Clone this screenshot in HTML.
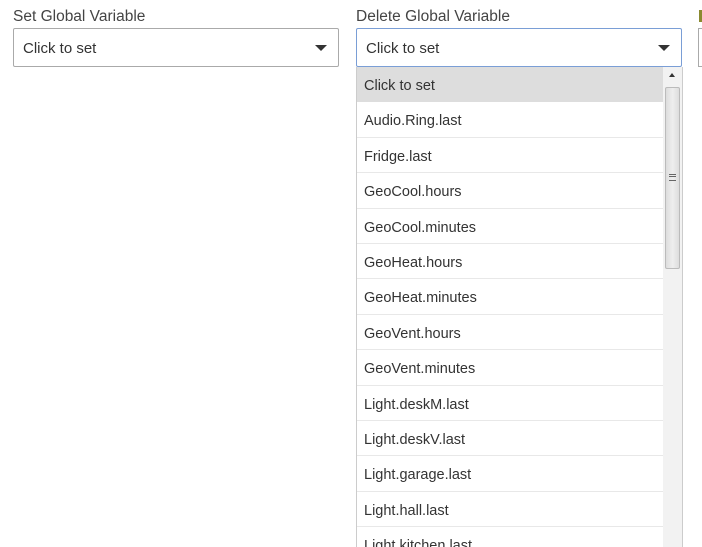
<!DOCTYPE html>
<html><head><style>
body{margin:0;width:702px;height:547px;overflow:hidden;background:#fff;font-family:"Liberation Sans",sans-serif;position:relative}
.lbl{position:absolute;top:8px;font-size:15.5px;color:#444}
.sel{position:absolute;top:28px;height:37px;width:324px;border:1px solid #aaa;border-radius:2px;box-sizing:content-box;font-size:15px;color:#333}
.sel span{position:absolute;left:9px;top:11px}
.sel i{position:absolute;right:11px;top:16px;width:0;height:0;border-left:6px solid transparent;border-right:6px solid transparent;border-top:6px solid #333}
.list{position:absolute;left:356px;top:67px;width:325px;height:480px;border-left:1px solid #ccc;border-right:1px solid #ccc;overflow:hidden}
.it{height:35.4px;box-sizing:border-box;border-bottom:1px solid #e8e8e8;font-size:14.5px;color:#333;padding:11px 0 0 7px;width:306px}
.it.h{background:#ddd;border-bottom:none}
.sb{position:absolute;left:306px;top:0;width:19px;height:480px;background:#f2f2f2}
.th{position:absolute;left:2px;top:20px;width:13px;height:180px;background:linear-gradient(90deg,#ddd,#eee 50%,#ddd);border:1px solid #bbb;border-radius:2px}
</style></head><body>
<div class="lbl" style="left:13px">Set Global Variable</div>
<div class="sel" style="left:13px"><span>Click to set</span><i></i></div>
<div class="lbl" style="left:356px">Delete Global Variable</div>
<div class="sel" style="left:356px;border-color:#7a9ed6"><span>Click to set</span><i></i></div>
<div style="position:absolute;left:699px;top:10px;width:3px;height:12px;background:#8a8a30"></div>
<div style="position:absolute;left:698px;top:28px;width:4px;height:37px;border:1px solid #aaa;border-right:none"></div>
<div class="list">
<div class="it h">Click to set</div>
<div class="it">Audio.Ring.last</div>
<div class="it">Fridge.last</div>
<div class="it">GeoCool.hours</div>
<div class="it">GeoCool.minutes</div>
<div class="it">GeoHeat.hours</div>
<div class="it">GeoHeat.minutes</div>
<div class="it">GeoVent.hours</div>
<div class="it">GeoVent.minutes</div>
<div class="it">Light.deskM.last</div>
<div class="it">Light.deskV.last</div>
<div class="it">Light.garage.last</div>
<div class="it">Light.hall.last</div>
<div class="it">Light.kitchen.last</div>
<div class="sb"><div style="position:absolute;left:6px;top:6px;border-left:3px solid transparent;border-right:3px solid transparent;border-bottom:4px solid #333"></div><div class="th"><div style="position:absolute;left:3px;top:86px;width:7px;height:5px;border-top:1px solid #666;border-bottom:1px solid #666"></div><div style="position:absolute;left:3px;top:88px;width:7px;height:1px;background:#666"></div></div></div>
</div>
</body></html>
